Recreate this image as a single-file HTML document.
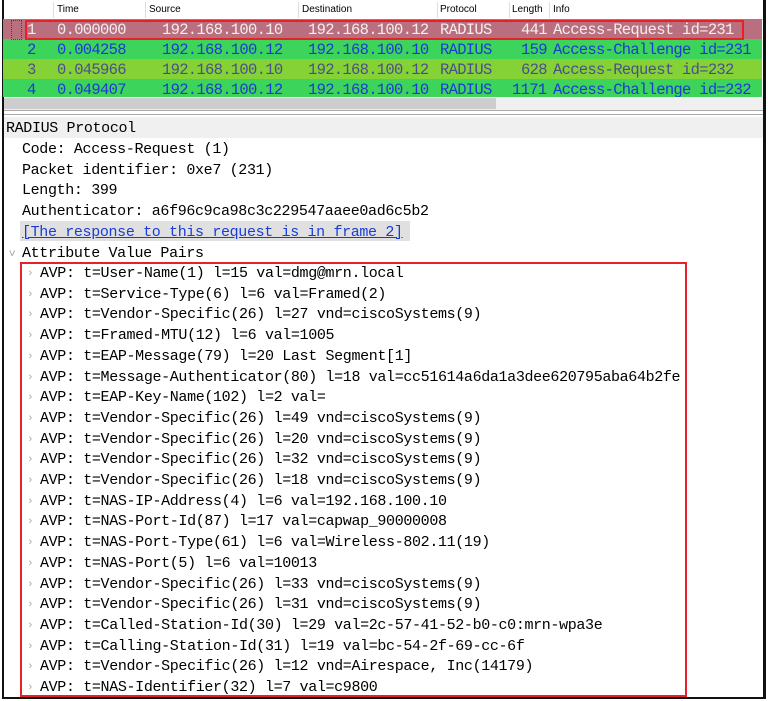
<!DOCTYPE html>
<html><head><style>
body{margin:0;width:768px;height:701px;background:#fff;position:relative;overflow:hidden;font-family:"Liberation Mono",monospace;}
.a{position:absolute;white-space:pre;}
.hdr{font-family:"Liberation Sans",sans-serif;font-size:10px;color:#000;top:4px;}
.row{position:absolute;left:3px;width:759px;height:20px;font-size:15.5px;letter-spacing:-0.7px;line-height:22px;}
.row span{position:absolute;top:0;white-space:pre;}
.d{position:absolute;font-size:15px;letter-spacing:-0.35px;line-height:20.7px;white-space:pre;color:#000;}
.chev{color:#999;font-size:11px;}
</style></head><body>
<div class="a" style="left:2px;top:0;width:2px;height:699px;background:#111"></div>
<div class="a" style="left:763px;top:0;width:3px;height:699px;background:#111"></div>
<div class="a" style="left:2px;top:697px;width:764px;height:2px;background:#111"></div>
<div class="a" style="left:4px;top:0;width:759px;height:19px;background:#fff;border-bottom:1px solid #ddd"></div>
<div class="a" style="left:53px;top:2px;width:1px;height:16px;background:#ddd"></div>
<div class="a" style="left:145px;top:2px;width:1px;height:16px;background:#ddd"></div>
<div class="a" style="left:298px;top:2px;width:1px;height:16px;background:#ddd"></div>
<div class="a" style="left:437px;top:2px;width:1px;height:16px;background:#ddd"></div>
<div class="a" style="left:509px;top:2px;width:1px;height:16px;background:#ddd"></div>
<div class="a" style="left:549px;top:2px;width:1px;height:16px;background:#ddd"></div>
<div class="a hdr" style="left:57px">Time</div>
<div class="a hdr" style="left:149px">Source</div>
<div class="a hdr" style="left:302px">Destination</div>
<div class="a hdr" style="left:440px">Protocol</div>
<div class="a hdr" style="left:512px">Length</div>
<div class="a hdr" style="left:553px">Info</div>

<div class="row" style="top:19px;background:#b96f7e;color:#f4eef0">
<span style="left:24px">1</span><span style="left:54px">0.000000</span><span style="left:159px">192.168.100.10</span><span style="left:305px">192.168.100.12</span><span style="left:437px">RADIUS</span><span style="left:518px">441</span><span style="left:550px">Access-Request id=231</span></div>
<div class="row" style="top:39px;background:#3cd45a;color:#1d3ad6">
<span style="left:24px">2</span><span style="left:54px">0.004258</span><span style="left:159px">192.168.100.12</span><span style="left:305px">192.168.100.10</span><span style="left:437px">RADIUS</span><span style="left:518px">159</span><span style="left:550px">Access-Challenge id=231</span></div>
<div class="row" style="top:59px;background:#84d235;color:#4a4f8c">
<span style="left:24px">3</span><span style="left:54px">0.045966</span><span style="left:159px">192.168.100.10</span><span style="left:305px">192.168.100.12</span><span style="left:437px">RADIUS</span><span style="left:518px">628</span><span style="left:550px">Access-Request id=232</span></div>
<div class="row" style="top:79px;height:18px;overflow:hidden;background:#3cd45a;color:#1d3ad6">
<span style="left:24px">4</span><span style="left:54px">0.049407</span><span style="left:159px">192.168.100.12</span><span style="left:305px">192.168.100.10</span><span style="left:437px">RADIUS</span><span style="left:509px">1171</span><span style="left:550px">Access-Challenge id=232</span></div>
<div class="a" style="left:25px;top:20px;width:715px;height:16px;border:2px solid #e8202a"></div>
<div class="a" style="left:11px;top:20px;width:9px;height:18px;border:1px dotted #444"></div>
<div class="a" style="left:4px;top:97px;width:759px;height:13px;background:#f0f0f0;border-bottom:1px solid #aaa"></div>
<div class="a" style="left:4px;top:98px;width:492px;height:11px;background:#cdcdcd"></div>
<div class="a" style="left:4px;top:114px;width:759px;height:1px;background:#aaa"></div>
<div class="a" style="left:4px;top:117px;width:759px;height:21px;background:#f0f0f0"></div>
<div class="a" style="left:20px;top:221px;width:390px;height:20px;background:#e0e0e0"></div>
<div class="d" style="left:6px;top:119px">RADIUS Protocol</div>
<div class="d" style="left:22px;top:140px">Code: Access-Request (1)
Packet identifier: 0xe7 (231)
Length: 399
Authenticator: a6f96c9ca98c3c229547aaee0ad6c5b2
<span style="color:#1a3cd6;text-decoration:underline">[The response to this request is in frame 2]</span>
Attribute Value Pairs</div>
<div class="a chev" style="left:7px;top:247px;transform:rotate(90deg)">&gt;</div>
<div class="a" style="left:20px;top:262px;width:663px;height:431px;border:2px solid #e8202a"></div>
<div class="d" style="left:27px;top:264px;color:#aaa;font-size:11px">›
›
›
›
›
›
›
›
›
›
›
›
›
›
›
›
›
›
›
›
›</div>
<div class="d" style="left:40px;top:264px">AVP: t=User-Name(1) l=15 val=dmg@mrn.local
AVP: t=Service-Type(6) l=6 val=Framed(2)
AVP: t=Vendor-Specific(26) l=27 vnd=ciscoSystems(9)
AVP: t=Framed-MTU(12) l=6 val=1005
AVP: t=EAP-Message(79) l=20 Last Segment[1]
AVP: t=Message-Authenticator(80) l=18 val=cc51614a6da1a3dee620795aba64b2fe
AVP: t=EAP-Key-Name(102) l=2 val=
AVP: t=Vendor-Specific(26) l=49 vnd=ciscoSystems(9)
AVP: t=Vendor-Specific(26) l=20 vnd=ciscoSystems(9)
AVP: t=Vendor-Specific(26) l=32 vnd=ciscoSystems(9)
AVP: t=Vendor-Specific(26) l=18 vnd=ciscoSystems(9)
AVP: t=NAS-IP-Address(4) l=6 val=192.168.100.10
AVP: t=NAS-Port-Id(87) l=17 val=capwap_90000008
AVP: t=NAS-Port-Type(61) l=6 val=Wireless-802.11(19)
AVP: t=NAS-Port(5) l=6 val=10013
AVP: t=Vendor-Specific(26) l=33 vnd=ciscoSystems(9)
AVP: t=Vendor-Specific(26) l=31 vnd=ciscoSystems(9)
AVP: t=Called-Station-Id(30) l=29 val=2c-57-41-52-b0-c0:mrn-wpa3e
AVP: t=Calling-Station-Id(31) l=19 val=bc-54-2f-69-cc-6f
AVP: t=Vendor-Specific(26) l=12 vnd=Airespace, Inc(14179)
AVP: t=NAS-Identifier(32) l=7 val=c9800</div>
</body></html>
